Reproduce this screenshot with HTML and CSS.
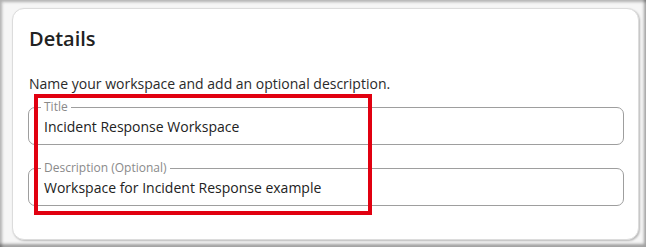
FILE: index.html
```html
<!DOCTYPE html>
<html>
<head>
<meta charset="utf-8">
<link rel="stylesheet" href="styles.css">
</head>
<body>
<div class="frame">
  <section class="card">
    <h2 class="card-title">Details</h2>
    <p class="card-intro">Name your workspace and add an optional description.</p>
    <fieldset class="field">
      <legend class="field-label">Title</legend>
      <div class="field-value">Incident Response Workspace</div>
    </fieldset>
    <fieldset class="field field-second">
      <legend class="field-label">Description (Optional)</legend>
      <div class="field-value">Workspace for Incident Response example</div>
    </fieldset>
  </section>
  <div class="highlight"></div>
</div>
</body>
</html>
```
FILE: styles.css
```css
html, body {
  margin: 0;
  padding: 0;
}
body {
  width: 646px;
  height: 247px;
  overflow: hidden;
  font-family: "Open Sans", "Liberation Sans", sans-serif;
  color: #212121;
}
.frame {
  position: relative;
  box-sizing: border-box;
  width: 646px;
  height: 247px;
  padding: 8px 7px 7px 12px;
  background: #f6f6f6;
  box-shadow: inset 3px 3px 3px -1px rgba(0,0,0,0.28), inset -4px -5px 3px -2px rgba(0,0,0,0.35);
}
.card {
  box-sizing: border-box;
  height: 232px;
  background: #fff;
  border: 1px solid #dcdcdc;
  border-radius: 12px;
  padding: 15px 14px 0 15px;
  box-shadow: 1px 1px 2px rgba(0,0,0,0.25);
}
.card-title {
  margin: 0 0 0 1px;
  font-size: 20px;
  line-height: 30px;
  font-weight: 600;
  color: #222;
}
.card-intro {
  margin: 20px 0 0 1px;
  font-size: 14px;
  line-height: 20px;
  color: #2a2a2a;
}
.field {
  margin: 5px 0 0 0;
  padding: 0 15px 7px 15px;
  border: 1px solid #9e9e9e;
  border-radius: 7px;
  min-width: 0;
}
.field-second {
  margin-top: 15px;
}
.field-label {
  margin-left: -3px;
  padding: 0 3px;
  font-size: 12px;
  line-height: 16px;
  color: #8a8a8a;
}
.field-value {
  padding-top: 2px;
  font-size: 14px;
  line-height: 20px;
  color: #222;
}
.highlight {
  position: absolute;
  left: 34px;
  top: 94px;
  width: 338px;
  height: 121px;
  box-sizing: border-box;
  border: 4px solid #e10010;
}
```
